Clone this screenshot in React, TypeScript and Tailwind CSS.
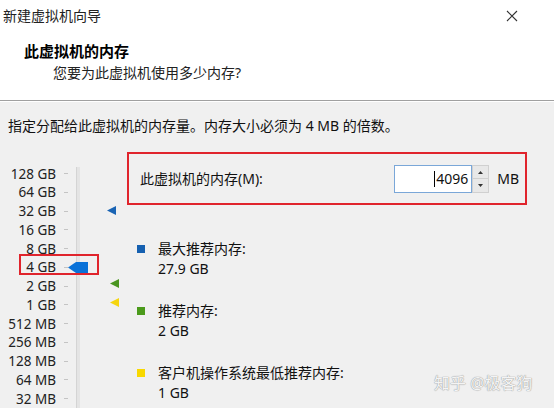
import React from "react";

const labels = [
  "128 GB",
  "64 GB",
  "32 GB",
  "16 GB",
  "8 GB",
  "4 GB",
  "2 GB",
  "1 GB",
  "512 MB",
  "256 MB",
  "128 MB",
  "64 MB",
  "32 MB",
];

function Tri({ color, className }: { color: string; className: string }) {
  return (
    <svg width="9" height="9" viewBox="0 0 9 9" className={className}>
      <polygon points="0,4.5 9,0 9,9" fill={color} />
    </svg>
  );
}

export default function App() {
  return (
    <div
      className="relative w-[554px] h-[408px] overflow-hidden bg-[#f0f0f0] flex flex-col text-black"
      style={{ fontFamily: '"Noto Sans", "Noto Sans CJK SC", sans-serif' }}
    >
      {/* title bar */}
      <div className="h-[32px] bg-white flex items-center justify-between pl-[3px] pr-[36px]">
        <span className="text-[14px] leading-[20px] text-[#222]">新建虚拟机向导</span>
        <svg width="12" height="12" viewBox="0 0 12 12">
          <path d="M1 1 L11 11 M11 1 L1 11" stroke="#333" strokeWidth="1.1" />
        </svg>
      </div>
      {/* header */}
      <div className="h-[69px] bg-white pl-[24px] pt-[8px]">
        <div className="font-bold text-[15px] leading-[22px]">此虚拟机的内存</div>
        <div className="pl-[29px] text-[14px] leading-[22px] text-[#222]">您要为此虚拟机使用多少内存?</div>
      </div>
      <div className="h-[2px] border-t border-[#a0a0a0] border-b border-b-white" />
      {/* body */}
      <div className="pl-[8px] pt-[14px] text-[14px] leading-[20px] text-[#111]">
        指定分配给此虚拟机的内存量。内存大小必须为 4 MB 的倍数。
      </div>
      <div className="flex flex-1">
        {/* slider */}
        <div className="relative w-[125px] pt-[28px]">
          <div className="absolute left-[76px] top-[31px] w-[4px] h-[260px] bg-[#e4e4e4] border-l border-[#d4d4d4]" />
          {labels.map((l, i) => (
            <div key={i} className="flex items-center h-[18.75px]">
              <span className="w-[56px] text-right text-[13.5px] leading-[18px] text-[#222] whitespace-nowrap">{l}</span>
              <span className="ml-[8px] w-[4px] h-[1px] bg-[#c4c4c4]" />
            </div>
          ))}
          <Tri color="#1a64b4" className="absolute left-[107px] top-[70px]" />
          <Tri color="#4a9520" className="absolute left-[110px] top-[143px]" />
          <Tri color="#f5d510" className="absolute left-[110px] top-[162px]" />
          <svg width="20" height="11" viewBox="0 0 20 11" className="absolute left-[68px] top-[126px]">
            <polygon points="0,5.5 8,0 20,0 20,11 8,11" fill="#0a72d8" />
          </svg>
          <div className="absolute left-[19px] top-[118px] w-[80px] h-[21px] border-2 border-[#e0242c]" />
        </div>
        {/* right */}
        <div className="flex flex-col ml-[2px] pt-[16px]">
          <div className="w-[400px] h-[53px] border-2 border-[#e0242c] flex items-center pl-[11px] pr-[6px]">
            <span className="text-[14px] text-[#111]">此虚拟机的内存(M):</span>
            <div className="ml-auto flex items-center">
              <div className="w-[78px] h-[28px] bg-white border border-[#7aa7d8] flex items-center justify-end pr-[3px]">
                <span className="w-[1px] h-[16px] bg-black mr-[1px]" />
                <span className="text-[14px] text-[#111]">4096</span>
              </div>
              <div className="w-[17px] h-[28px] flex flex-col bg-[#e8e8e8] border border-[#d0d0d0]">
                <div className="flex-1 flex items-center justify-center border-b border-[#cfcfcf]">
                  <svg width="5" height="3" viewBox="0 0 5 3"><polygon points="2.5,0 5,3 0,3" fill="#333" /></svg>
                </div>
                <div className="flex-1 flex items-center justify-center">
                  <svg width="5" height="3" viewBox="0 0 5 3"><polygon points="0,0 5,0 2.5,3" fill="#333" /></svg>
                </div>
              </div>
              <span className="ml-[8px] text-[14px] text-[#111]">MB</span>
            </div>
          </div>
          <div className="flex flex-col gap-[22px] pl-[10px] pt-[34px] text-[14px] leading-[20px] text-[#111]">
            <div className="flex">
              <span className="w-[8px] h-[8px] bg-[#1560b0] mt-[6px]" />
              <div className="ml-[13px]">
                <div>最大推荐内存:</div>
                <div>27.9 GB</div>
              </div>
            </div>
            <div className="flex">
              <span className="w-[8px] h-[8px] bg-[#4b9a1b] mt-[6px]" />
              <div className="ml-[13px]">
                <div>推荐内存:</div>
                <div>2 GB</div>
              </div>
            </div>
            <div className="flex">
              <span className="w-[8px] h-[8px] bg-[#f8d800] mt-[6px]" />
              <div className="ml-[13px]">
                <div>客户机操作系统最低推荐内存:</div>
                <div>1 GB</div>
              </div>
            </div>
          </div>
        </div>
      </div>
      <div
        className="absolute left-[434px] top-[372px] text-[16px] leading-[22px] text-[#f4f4f4] whitespace-nowrap"
        style={{ textShadow: "0 0 1px #9a9a9a, 0 0 1px #9a9a9a" }}
      >
        知乎 @极客狗
      </div>
    </div>
  );
}
